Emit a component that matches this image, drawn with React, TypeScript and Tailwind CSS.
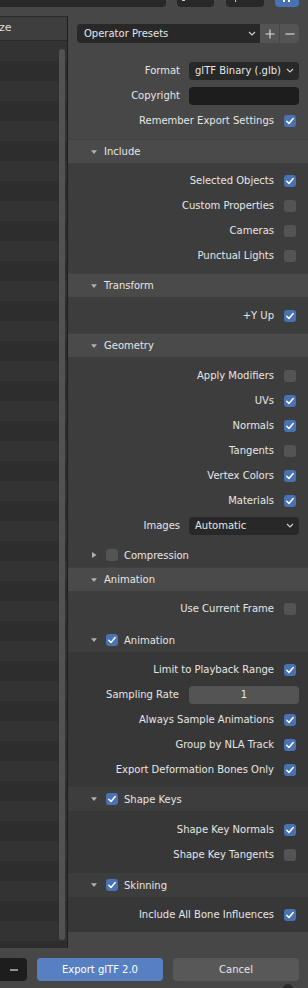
import React from 'react'

const Tri = ({ open = true }: { open?: boolean }) => (
  <svg width="6" height="6" viewBox="0 0 6 6" className="shrink-0">
    {open ? <path d="M0 1.2h6L3 5z" fill="#b0b0b0" /> : <path d="M1 0v6l4.5-3z" fill="#b0b0b0" />}
  </svg>
)

const Check = ({ on }: { on?: boolean }) => (
  <span className={`w-3 h-3 rounded-[3px] flex items-center justify-center shrink-0 ${on ? 'bg-[#4772b3]' : 'bg-[#545454]'}`}>
    {on && (
      <svg width="12" height="12" viewBox="0 0 12 12">
        <path d="M2.8 6.2l2.2 2.3 4.2-5" fill="none" stroke="#fff" strokeWidth="1.5" strokeLinecap="round" strokeLinejoin="round" />
      </svg>
    )}
  </span>
)

const Chevron = () => (
  <svg width="8" height="5" viewBox="0 0 8 5" className="shrink-0">
    <path d="M1 1l3 3 3-3" fill="none" stroke="#cfcfcf" strokeWidth="1.2" />
  </svg>
)

const CheckRow = ({ label, on }: { label: string; on?: boolean }) => (
  <div className="h-[25px] flex items-center justify-end pr-3">
    <span className="mr-[10px]">{label}</span>
    <Check on={on} />
  </div>
)

const Field = ({ label, children }: { label: string; children: React.ReactNode }) => (
  <div className="h-[25px] flex items-center">
    <span className="w-[112px] text-right">{label}</span>
    <div className="ml-[9px] w-[110px]">{children}</div>
  </div>
)

const Dropdown = ({ text }: { text: string }) => (
  <div className="h-[18px] rounded-[4px] bg-[#282828] flex items-center justify-between pl-[6px] pr-[5px]">
    <span>{text}</span>
    <Chevron />
  </div>
)

const Header = ({ title }: { title: string }) => (
  <div className="h-6 flex items-center pl-[23px] bg-[#4a4a4a] border-t border-[#404040]">
    <Tri />
    <span className="ml-[7px]">{title}</span>
  </div>
)

const SubHeader = ({ title, open = true, on }: { title: string; open?: boolean; on?: boolean }) => (
  <div className="h-6 flex items-center pl-[23px]">
    <Tri open={open} />
    <span className="ml-[9px]"><Check on={on} /></span>
    <span className="ml-[6px]">{title}</span>
  </div>
)

export default function App() {
  const rows = Array.from({ length: 46 })
  return (
    <div className="w-[308px] h-[988px] bg-[#474747] text-[#e6e6e6] text-[10px] font-['DejaVu_Sans',sans-serif] overflow-hidden flex flex-col">
      {/* cut-off top toolbar */}
      <div className="h-[7px] flex shrink-0">
        <div className="w-[166px] bg-[#282828] rounded-br-[4px]" />
        <div className="ml-[11px] w-[37px] bg-[#282828] rounded-b-[4px] relative">
          <span className="absolute left-[5px] top-0 w-[3px] h-[1px] bg-[#ccc]" />
        </div>
        <div className="ml-[12px] w-[38px] bg-[#282828] rounded-b-[4px] relative">
          <span className="absolute left-[9px] top-0 w-[1px] h-[2px] bg-[#ccc]" />
        </div>
        <div className="ml-[11px] w-[24px] bg-[#4772b3] rounded-b-[4px] relative">
          <span className="absolute left-[8px] top-0 w-[2px] h-[2px] bg-white" />
          <span className="absolute left-[13px] top-0 w-[2px] h-[2px] bg-white" />
        </div>
      </div>

      <div className="h-[941px] flex shrink-0">
        {/* file list */}
        <div className="w-[68px] pt-[9px] flex flex-col shrink-0">
          <div className="flex-1 flex flex-col border-r border-[#1e1e1e] relative overflow-hidden">
            <div className="h-[25px] bg-[#3e3e3e] border-t border-b border-[#2a2a2a] flex items-center text-[11px] text-[#dcdcdc] shrink-0">
              <span className="-ml-[1px]">ze</span>
            </div>
            <div className="flex-1 flex flex-col overflow-hidden">
              {rows.map((_, i) => (
                <div key={i} className={`h-5 shrink-0 ${i % 2 === 0 ? 'bg-[#333333]' : 'bg-[#2d2d2d]'}`} />
              ))}
            </div>
            <div className="absolute left-[59px] top-[33px] w-[6px] h-[891px] rounded-full bg-[#525252]" />
          </div>
        </div>

        {/* operator panel */}
        <div className="flex-1 flex flex-col">
          <div className="pt-[17px] pb-[6px]">
            <div className="h-[19px] flex items-center pl-[9px] pr-[9px]">
              <div className="flex-1 h-full rounded-l-[4px] bg-[#282828] flex items-center justify-between pl-[7px] pr-[4px]">
                <span>Operator Presets</span>
                <Chevron />
              </div>
              <div className="w-5 h-full bg-[#545454] flex items-center justify-center border-r border-[#474747]">
                <svg width="10" height="10" viewBox="0 0 10 10"><path d="M5 0.5v9M0.5 5h9" stroke="#e0e0e0" strokeWidth="1.1" /></svg>
              </div>
              <div className="w-[19px] h-full bg-[#545454] rounded-r-[4px] flex items-center justify-center">
                <svg width="10" height="10" viewBox="0 0 10 10"><path d="M0.5 5h9" stroke="#e0e0e0" strokeWidth="1.1" /></svg>
              </div>
            </div>
            <div className="mt-[15px]">
              <Field label="Format"><Dropdown text="glTF Binary (.glb)" /></Field>
              <Field label="Copyright"><div className="h-[18px] rounded-[4px] bg-[#1d1d1d]" /></Field>
              <CheckRow label="Remember Export Settings" on />
            </div>
          </div>

          <Header title="Include" />
          <div className="bg-[#3d3d3d] py-[5px]">
            <CheckRow label="Selected Objects" on />
            <CheckRow label="Custom Properties" />
            <CheckRow label="Cameras" />
            <CheckRow label="Punctual Lights" />
          </div>

          <Header title="Transform" />
          <div className="bg-[#3d3d3d] pt-[6px] pb-[5px]">
            <CheckRow label="+Y Up" on />
          </div>

          <Header title="Geometry" />
          <div className="bg-[#3d3d3d] pt-[6px]">
            <CheckRow label="Apply Modifiers" />
            <CheckRow label="UVs" on />
            <CheckRow label="Normals" on />
            <CheckRow label="Tangents" />
            <CheckRow label="Vertex Colors" on />
            <CheckRow label="Materials" on />
            <Field label="Images"><Dropdown text="Automatic" /></Field>
            <div className="mt-[5px]">
              <SubHeader title="Compression" open={false} />
            </div>
          </div>

          <Header title="Animation" />
          <div className="bg-[#3d3d3d] pt-[5px]">
            <CheckRow label="Use Current Frame" />
            <div className="mt-[7px]">
              <SubHeader title="Animation" on />
            </div>
            <div className="bg-[#373737] py-[5px]">
              <CheckRow label="Limit to Playback Range" on />
              <div className="h-[25px] flex items-center">
                <span className="w-[111px] text-right">Sampling Rate</span>
                <div className="ml-[10px] w-[110px] h-[18px] rounded-[4px] bg-[#545454] flex items-center justify-center">1</div>
              </div>
              <CheckRow label="Always Sample Animations" on />
              <CheckRow label="Group by NLA Track" on />
              <CheckRow label="Export Deformation Bones Only" on />
            </div>
            <SubHeader title="Shape Keys" on />
            <div className="bg-[#373737] py-[6px]">
              <CheckRow label="Shape Key Normals" on />
              <CheckRow label="Shape Key Tangents" />
            </div>
            <SubHeader title="Skinning" on />
            <div className="bg-[#373737] py-[5px]">
              <CheckRow label="Include All Bone Influences" on />
            </div>
          </div>
          <div className="flex-1" />
        </div>
      </div>

      {/* bottom buttons */}
      <div className="flex-1 pt-[10px] flex items-start relative">
        <div className="w-[27px] h-[23px] bg-[#1d1d1d] rounded-r-[4px] flex items-center justify-center">
          <svg width="8" height="2" viewBox="0 0 8 2"><path d="M0 1h8" stroke="#e0e0e0" strokeWidth="1.2" /></svg>
        </div>
        <div className="ml-[10px] w-[126px] h-[23px] bg-[#5680c2] rounded-[4px] flex items-center justify-center text-white">Export glTF 2.0</div>
        <div className="ml-[10px] w-[126px] h-[23px] bg-[#585858] rounded-[4px] flex items-center justify-center text-[#e6e6e6]">Cancel</div>
        <span className="absolute left-[283px] top-[36px] w-[10px] h-[10px] rounded-full bg-[#2a2a2a]" />
      </div>
    </div>
  )
}
